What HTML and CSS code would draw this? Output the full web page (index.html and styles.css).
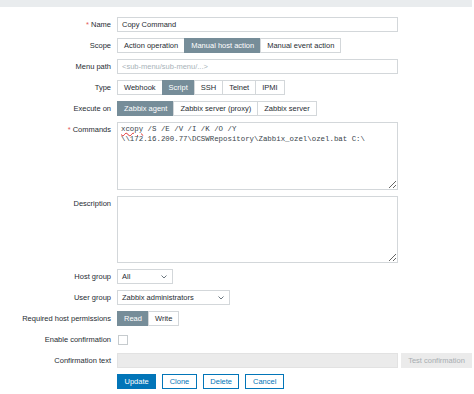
FILE: index.html
```html
<!DOCTYPE html>
<html lang="en">
<head>
    <meta charset="UTF-8">
    <title>Script</title>
    <link rel="stylesheet" href="styles.css">
</head>
<body>
    <div class="top-band"></div>

    <form class="script-form">
        <label class="field-label"><span class="req">*</span> Name</label>
        <div class="field"><div class="input wide">Copy Command</div></div>

        <label class="field-label">Scope</label>
        <div class="field">
            <div class="segments">
                <span class="seg">Action operation</span>
                <span class="seg on">Manual host action</span>
                <span class="seg">Manual event action</span>
            </div>
        </div>

        <label class="field-label">Menu path</label>
        <div class="field"><div class="input wide placeholder">&lt;sub-menu/sub-menu/...&gt;</div></div>

        <label class="field-label">Type</label>
        <div class="field">
            <div class="segments">
                <span class="seg">Webhook</span>
                <span class="seg on">Script</span>
                <span class="seg">SSH</span>
                <span class="seg">Telnet</span>
                <span class="seg">IPMI</span>
            </div>
        </div>

        <label class="field-label">Execute on</label>
        <div class="field">
            <div class="segments">
                <span class="seg on">Zabbix agent</span>
                <span class="seg">Zabbix server (proxy)</span>
                <span class="seg">Zabbix server</span>
            </div>
        </div>

        <label class="field-label"><span class="req">*</span> Commands</label>
        <div class="field">
            <div class="textarea commands"><span class="typo">xcopy</span> /S /E /V /I /K /O /Y<br>\\172.16.200.77\DCSWRepository\Zabbix_ozel\ozel.bat C:\</div>
        </div>

        <label class="field-label">Description</label>
        <div class="field"><div class="textarea"></div></div>

        <label class="field-label">Host group</label>
        <div class="field">
            <div class="select host-select">All
                <svg class="chevron" width="6" height="4" viewBox="0 0 6 4"><path d="M0.5 0.5 L3 3 L5.5 0.5" fill="none" stroke="#5a6670" stroke-width="0.9"/></svg>
            </div>
        </div>

        <label class="field-label">User group</label>
        <div class="field">
            <div class="select user-select">Zabbix administrators
                <svg class="chevron" width="6" height="4" viewBox="0 0 6 4"><path d="M0.5 0.5 L3 3 L5.5 0.5" fill="none" stroke="#5a6670" stroke-width="0.9"/></svg>
            </div>
        </div>

        <label class="field-label">Required host permissions</label>
        <div class="field">
            <div class="segments">
                <span class="seg on">Read</span>
                <span class="seg">Write</span>
            </div>
        </div>

        <label class="field-label">Enable confirmation</label>
        <div class="field"><span class="checkbox"></span></div>

        <label class="field-label">Confirmation text</label>
        <div class="field confirm-row">
            <div class="input wide disabled"></div>
            <span class="btn-disabled">Test confirmation</span>
        </div>

        <div></div>
        <div class="field actions">
            <span class="btn primary">Update</span>
            <span class="btn">Clone</span>
            <span class="btn">Delete</span>
            <span class="btn">Cancel</span>
        </div>
    </form>
</body>
</html>
```

FILE: styles.css
```css
body {
    margin: 0;
    background-color: #ffffff;
    font-family: 'Liberation Sans', Arial, sans-serif;
    font-size: 7.5px;
    color: #1f2c33;
}

.top-band {
    width: 472px;
    height: 7px;
    background-color: #e9ecee;
}

.script-form {
    display: grid;
    grid-template-columns: 111px auto;
    column-gap: 6px;
    row-gap: 6px;
    margin-top: 10px;
}

.field-label {
    text-align: right;
    line-height: 15px;
    white-space: nowrap;
}

.req {
    color: #e45959;
}

.field {
    display: flex;
    align-items: center;
    min-height: 15px;
}

.input {
    box-sizing: border-box;
    height: 15px;
    line-height: 13px;
    padding: 0 4px;
    border: 1px solid #d3d7da;
    background-color: #ffffff;
}

.wide {
    width: 281px;
}

.placeholder {
    color: #a9b3b9;
}

.disabled {
    background-color: #ebebeb;
    border-color: #e2e2e2;
}

.segments {
    display: flex;
    height: 15px;
}

.seg {
    box-sizing: border-box;
    height: 15px;
    line-height: 13px;
    padding: 0 6px;
    border: 1px solid #d3d7da;
    margin-left: -1px;
    background-color: #ffffff;
    white-space: nowrap;
}

.seg:first-child {
    margin-left: 0;
}

.seg.on {
    background-color: #768d99; /* checked segment */
    border-color: #768d99;
    color: #ffffff;
}

.textarea {
    box-sizing: border-box;
    width: 281px;
    height: 67px;
    border: 1px solid #d3d7da;
    background-color: #ffffff;
    padding: 2px 3px;
    resize: vertical;
    overflow: auto;
}

.commands {
    height: 68px;
    font-family: 'Liberation Mono', 'Courier New', monospace;
    font-size: 7.4px;
    line-height: 9.7px;
    color: #3a454c;
    white-space: nowrap;
}

.typo {
    text-decoration: underline wavy #e03030;
    text-decoration-thickness: 0.7px;
}

.select {
    box-sizing: border-box;
    position: relative;
    height: 15px;
    line-height: 13px;
    padding: 0 4px;
    border: 1px solid #d3d7da;
    background-color: #ffffff;
}

.host-select {
    width: 56px;
}

.user-select {
    width: 113px;
}

.chevron {
    position: absolute;
    right: 5px;
    top: 5px;
}

.checkbox {
    box-sizing: border-box;
    width: 10px;
    height: 10px;
    margin-left: 1px;
    border: 1px solid #c6cbce;
    background-color: #ffffff;
}

.confirm-row {
    gap: 3px;
}

.btn-disabled {
    box-sizing: border-box;
    width: 71px;
    height: 15px;
    line-height: 15px;
    text-align: center;
    background-color: #ebebeb;
    color: #a7adb1;
    white-space: nowrap;
}

.actions {
    gap: 6px;
}

.btn {
    box-sizing: border-box;
    height: 15px;
    line-height: 13px;
    padding: 0 6.5px;
    border: 1px solid #0275b8;
    color: #0275b8;
    background-color: #ffffff;
}

.btn.primary {
    background-color: #0275b8;
    color: #ffffff;
}
```
